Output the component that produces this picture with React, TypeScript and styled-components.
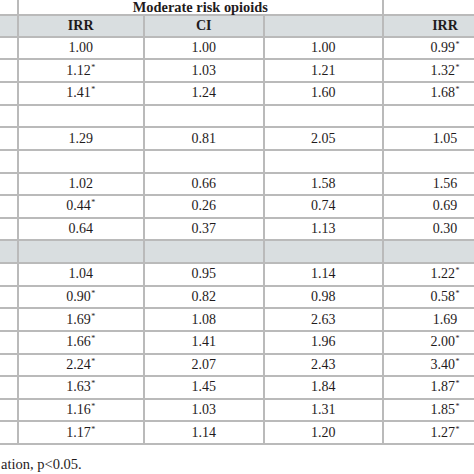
import styled, { createGlobalStyle } from "styled-components";

const GlobalStyle = createGlobalStyle`
  html, body {
    margin: 0;
    padding: 0;
    background: #ffffff;
  }
`;

const COLUMNS = "16.7px 126px 120px 119.3px 124px";
const LINE = "#bababa";

const Page = styled.div`
  width: 474px;
  height: 474px;
  overflow: hidden;
  background: #ffffff;
  font-family: "Liberation Serif", "Times New Roman", serif;
  color: #1f1b1c;
`;

const Table = styled.div`
  width: 506px;
  display: flex;
  flex-direction: column;
`;

const Row = styled.div<{ $height: number; $shaded?: boolean }>`
  display: grid;
  grid-template-columns: ${COLUMNS};
  height: ${({ $height }) => $height}px;
  box-sizing: border-box;
  border-bottom: 2px solid ${LINE};
  background: ${({ $shaded }) => ($shaded ? "#d9dee0" : "#ffffff")};
`;

const TitleRow = styled.div`
  display: grid;
  grid-template-columns: 16.7px 365.3px 124px;
  height: 16px;
  box-sizing: border-box;
  border-bottom: 2px solid ${LINE};
`;

const Cell = styled.div<{ $bold?: boolean; $edge?: boolean }>`
  display: flex;
  align-items: center;
  justify-content: center;
  box-sizing: border-box;
  border-left: ${({ $edge }) => ($edge ? "none" : `2px solid ${LINE}`)};
  font-size: 14px;
  font-weight: ${({ $bold }) => ($bold ? 700 : 400)};
  white-space: nowrap;
  line-height: 1;
`;

const Title = styled(Cell)`
  font-size: 14.4px;
  align-items: flex-start;
  padding-top: 0px;
`;

const Star = styled.sup`
  font-size: 8px;
  line-height: 0;
  vertical-align: 5px;
  margin-left: 0.5px;
`;

const Note = styled.p`
  margin: 12px 0 0 1px;
  font-size: 14.5px;
  line-height: 1;
  white-space: nowrap;
`;

type RowData = string[] | "blank" | "shaded";

const rows: RowData[] = [
  ["1.00", "1.00", "1.00", "0.99*"],
  ["1.12*", "1.03", "1.21", "1.32*"],
  ["1.41*", "1.24", "1.60", "1.68*"],
  "blank",
  ["1.29", "0.81", "2.05", "1.05"],
  "blank",
  ["1.02", "0.66", "1.58", "1.56"],
  ["0.44*", "0.26", "0.74", "0.69"],
  ["0.64", "0.37", "1.13", "0.30"],
  "shaded",
  ["1.04", "0.95", "1.14", "1.22*"],
  ["0.90*", "0.82", "0.98", "0.58*"],
  ["1.69*", "1.08", "2.63", "1.69"],
  ["1.66*", "1.41", "1.96", "2.00*"],
  ["2.24*", "2.07", "2.43", "3.40*"],
  ["1.63*", "1.45", "1.84", "1.87*"],
  ["1.16*", "1.03", "1.31", "1.85*"],
  ["1.17*", "1.14", "1.20", "1.27*"],
];

const Value = ({ text }: { text: string }) => {
  const marked = text.endsWith("*");
  const num = marked ? text.slice(0, -1) : text;
  return (
    <span>
      {num}
      {marked && <Star>*</Star>}
    </span>
  );
};

const ROW_H = 22.63;

const App = () => {
  return (
    <Page>
      <GlobalStyle />
      <Table>
        <TitleRow>
          <Cell $edge />
          <Title $bold>Moderate risk opioids</Title>
          <Cell />
        </TitleRow>
        <Row $height={21.8} $shaded>
          <Cell $edge />
          <Cell $bold>IRR</Cell>
          <Cell $bold>CI</Cell>
          <Cell />
          <Cell $bold>IRR</Cell>
        </Row>
        {rows.map((row, i) => {
          const values = Array.isArray(row) ? row : ["", "", "", ""];
          return (
            <Row key={i} $height={ROW_H} $shaded={row === "shaded"}>
              <Cell $edge />
              {values.map((v, j) => (
                <Cell key={j}>{v && <Value text={v} />}</Cell>
              ))}
            </Row>
          );
        })}
      </Table>
      <Note>ation, p&lt;0.05.</Note>
    </Page>
  );
};

export default App;
